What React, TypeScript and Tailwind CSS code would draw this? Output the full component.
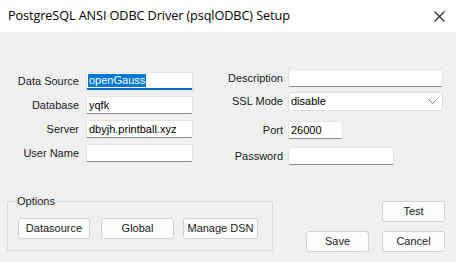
import * as React from "react";

const label = "text-[11px] leading-[13px] text-[#1a1a1a] text-right";
const field =
  "h-[18px] bg-white border border-[#e4e4e4] border-b-[#8a8a8a] rounded-[2px] flex items-center px-[2px] text-[11px] leading-[13px] text-black";
const button =
  "h-[21px] bg-[#fdfdfd] border border-[#d2d2d2] rounded-[3px] flex items-center justify-center text-[11px] leading-[13px] text-[#1a1a1a]";

function Row({ name, width, labelWidth, gap, children }: { name: string; width: number; labelWidth: string; gap: string; children?: React.ReactNode }) {
  return (
    <div className={`flex items-center ${gap}`}>
      <span className={`${label} ${labelWidth} shrink-0`}>{name}</span>
      <div className={field} style={{ width }}>
        {children}
      </div>
    </div>
  );
}

export default function App() {
  return (
    <div className="w-[456px] h-[262px] bg-[#f0f0f0] flex flex-col overflow-hidden font-['Liberation_Sans',Arial,sans-serif]">
      <div className="h-[32px] bg-white flex items-center justify-between pl-[8px] pr-[10px] shrink-0">
        <span className="text-[12.7px] text-black font-['Open_Sans',sans-serif] tracking-[-0.1px]">
          PostgreSQL ANSI ODBC Driver (psqlODBC) Setup
        </span>
        <svg width="11" height="11" viewBox="0 0 11 11" className="mr-[1px]">
          <path d="M0.5 0.5 L10.5 10.5 M10.5 0.5 L0.5 10.5" stroke="#222" strokeWidth="1.1" fill="none" />
        </svg>
      </div>

      <div className="h-[163px] flex shrink-0">
        <div className="w-[200px] pt-[40px] flex flex-col gap-[6px]">
          <div className="flex items-center gap-[7px]">
            <span className={`${label} w-[79px] shrink-0`}>Data Source</span>
            <div className="w-[107px] h-[18px] bg-white border border-[#e4e4e4] border-b-2 border-b-[#0067c0] rounded-[2px] flex items-center px-[1px] text-[11px] leading-[13px]">
              <span className="bg-[#0078d7] text-white px-[1px]">openGauss</span>
            </div>
          </div>
          <Row name="Database" width={107} labelWidth="w-[79px]" gap="gap-[7px]">yqfk</Row>
          <Row name="Server" width={107} labelWidth="w-[79px]" gap="gap-[7px]">dbyjh.printball.xyz</Row>
          <Row name="User Name" width={107} labelWidth="w-[79px]" gap="gap-[7px]" />
        </div>

        <div className="pt-[37px] flex flex-col">
          <Row name="Description" width={155} labelWidth="w-[83px]" gap="gap-[5px]" />
          <div className="flex items-center gap-[5px] mt-[5px]">
            <span className={`${label} w-[83px] shrink-0`}>SSL Mode</span>
            <div className="w-[155px] h-[19px] bg-white border border-[#dcdcdc] rounded-[2px] flex items-center justify-between pl-[2px] pr-[5px] text-[11px] leading-[13px] text-black">
              <span>disable</span>
              <svg width="9" height="5" viewBox="0 0 9 5">
                <path d="M0.5 0.5 L4.5 4.5 L8.5 0.5" stroke="#777" strokeWidth="1" fill="none" />
              </svg>
            </div>
          </div>
          <div className="mt-[10px]">
            <Row name="Port" width={55} labelWidth="w-[83px]" gap="gap-[5px]">26000</Row>
          </div>
          <div className="mt-[8px]">
            <Row name="Password" width={106} labelWidth="w-[83px]" gap="gap-[5px]" />
          </div>
        </div>
      </div>

      <div className="flex">
        <fieldset className="ml-[7px] w-[266px] h-[56px] border border-[#dadada] rounded-[2px] flex">
          <legend className="ml-[8px] px-[1px] text-[11px] leading-[13px] text-[#1a1a1a]">Options</legend>
          <div className="flex pt-[10px] pl-[10px]">
            <div className={`${button} w-[72px] h-[20px]`}>Datasource</div>
            <div className={`${button} w-[73px] h-[20px] ml-[11px]`}>Global</div>
            <div className={`${button} w-[75px] h-[20px] ml-[9px]`}>Manage DSN</div>
          </div>
        </fieldset>
        <div className="ml-[33px] pt-[6px] flex flex-col items-end">
          <div className={`${button} w-[63px]`}>Test</div>
          <div className="flex gap-[13px] mt-[9px]">
            <div className={`${button} w-[63px] border-[#0067c0]`}>Save</div>
            <div className={`${button} w-[63px]`}>Cancel</div>
          </div>
        </div>
      </div>
    </div>
  );
}
